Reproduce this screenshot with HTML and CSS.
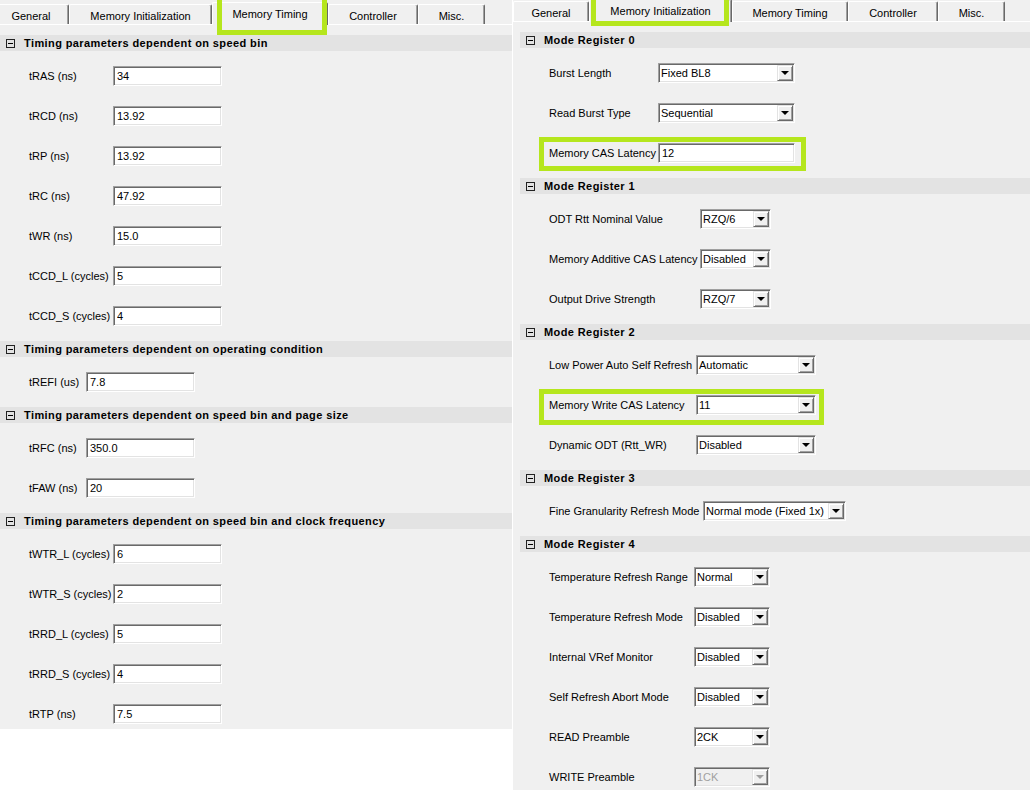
FILE: index.html
```html
<!DOCTYPE html>
<html lang="en">
<head>
    <meta charset="UTF-8">
    <title>Memory Interface Settings</title>
    <link rel="stylesheet" href="styles.css">
</head>
<body>
    <div class="screen">
        <!-- Memory Timing tab -->
        <section class="dialog dialog-timing">
            <div class="tabs">
                <span class="tab tab-general">General</span>
                <span class="tab tab-init">Memory Initialization</span>
                <span class="tab tab-timing is-active">Memory Timing</span>
                <span class="tab tab-controller">Controller</span>
                <span class="tab tab-misc">Misc.</span>
            </div>
            <div class="pane">
                <div class="group speed-bin">
                    <div class="group-head"><span class="toggle"></span>Timing parameters dependent on speed bin</div>
                    <div class="group-body">
                        <div class="field"><span class="label">tRAS (ns)</span><input class="textbox" value="34"></div>
                        <div class="field"><span class="label">tRCD (ns)</span><input class="textbox" value="13.92"></div>
                        <div class="field"><span class="label">tRP (ns)</span><input class="textbox" value="13.92"></div>
                        <div class="field"><span class="label">tRC (ns)</span><input class="textbox" value="47.92"></div>
                        <div class="field"><span class="label">tWR (ns)</span><input class="textbox" value="15.0"></div>
                        <div class="field"><span class="label">tCCD_L (cycles)</span><input class="textbox" value="5"></div>
                        <div class="field"><span class="label">tCCD_S (cycles)</span><input class="textbox" value="4"></div>
                    </div>
                </div>
                <div class="group op-cond">
                    <div class="group-head"><span class="toggle"></span>Timing parameters dependent on operating condition</div>
                    <div class="group-body">
                        <div class="field"><span class="label">tREFI (us)</span><input class="textbox" value="7.8"></div>
                    </div>
                </div>
                <div class="group page-size">
                    <div class="group-head"><span class="toggle"></span>Timing parameters dependent on speed bin and page size</div>
                    <div class="group-body">
                        <div class="field"><span class="label">tRFC (ns)</span><input class="textbox" value="350.0"></div>
                        <div class="field"><span class="label">tFAW (ns)</span><input class="textbox" value="20"></div>
                    </div>
                </div>
                <div class="group clock-freq">
                    <div class="group-head"><span class="toggle"></span>Timing parameters dependent on speed bin and clock frequency</div>
                    <div class="group-body">
                        <div class="field"><span class="label">tWTR_L (cycles)</span><input class="textbox" value="6"></div>
                        <div class="field"><span class="label">tWTR_S (cycles)</span><input class="textbox" value="2"></div>
                        <div class="field"><span class="label">tRRD_L (cycles)</span><input class="textbox" value="5"></div>
                        <div class="field"><span class="label">tRRD_S (cycles)</span><input class="textbox" value="4"></div>
                        <div class="field"><span class="label">tRTP (ns)</span><input class="textbox" value="7.5"></div>
                    </div>
                </div>
            </div>
        </section>

        <!-- Memory Initialization tab -->
        <section class="dialog dialog-init">
            <div class="tabs">
                <span class="tab tab-general">General</span>
                <span class="tab tab-init is-active">Memory Initialization</span>
                <span class="tab tab-timing">Memory Timing</span>
                <span class="tab tab-controller">Controller</span>
                <span class="tab tab-misc">Misc.</span>
            </div>
            <div class="pane">
                <div class="group mr0">
                    <div class="group-head"><span class="toggle"></span>Mode Register 0</div>
                    <div class="group-body">
                        <div class="field"><span class="label">Burst Length</span><div class="combo"><span class="combo-value">Fixed BL8</span><span class="combo-btn"></span></div></div>
                        <div class="field"><span class="label">Read Burst Type</span><div class="combo"><span class="combo-value">Sequential</span><span class="combo-btn"></span></div></div>
                        <div class="field marked mark-wide"><span class="label">Memory CAS Latency</span><input class="textbox" value="12"></div>
                    </div>
                </div>
                <div class="group mr1">
                    <div class="group-head"><span class="toggle"></span>Mode Register 1</div>
                    <div class="group-body">
                        <div class="field"><span class="label">ODT Rtt Nominal Value</span><div class="combo"><span class="combo-value">RZQ/6</span><span class="combo-btn"></span></div></div>
                        <div class="field"><span class="label">Memory Additive CAS Latency</span><div class="combo"><span class="combo-value">Disabled</span><span class="combo-btn"></span></div></div>
                        <div class="field"><span class="label">Output Drive Strength</span><div class="combo"><span class="combo-value">RZQ/7</span><span class="combo-btn"></span></div></div>
                    </div>
                </div>
                <div class="group mr2">
                    <div class="group-head"><span class="toggle"></span>Mode Register 2</div>
                    <div class="group-body">
                        <div class="field"><span class="label">Low Power Auto Self Refresh</span><div class="combo"><span class="combo-value">Automatic</span><span class="combo-btn"></span></div></div>
                        <div class="field marked"><span class="label">Memory Write CAS Latency</span><div class="combo"><span class="combo-value">11</span><span class="combo-btn"></span></div></div>
                        <div class="field"><span class="label">Dynamic ODT (Rtt_WR)</span><div class="combo"><span class="combo-value">Disabled</span><span class="combo-btn"></span></div></div>
                    </div>
                </div>
                <div class="group mr3">
                    <div class="group-head"><span class="toggle"></span>Mode Register 3</div>
                    <div class="group-body">
                        <div class="field"><span class="label">Fine Granularity Refresh Mode</span><div class="combo"><span class="combo-value">Normal mode (Fixed 1x)</span><span class="combo-btn"></span></div></div>
                    </div>
                </div>
                <div class="group mr4">
                    <div class="group-head"><span class="toggle"></span>Mode Register 4</div>
                    <div class="group-body">
                        <div class="field"><span class="label">Temperature Refresh Range</span><div class="combo"><span class="combo-value">Normal</span><span class="combo-btn"></span></div></div>
                        <div class="field"><span class="label">Temperature Refresh Mode</span><div class="combo"><span class="combo-value">Disabled</span><span class="combo-btn"></span></div></div>
                        <div class="field"><span class="label">Internal VRef Monitor</span><div class="combo"><span class="combo-value">Disabled</span><span class="combo-btn"></span></div></div>
                        <div class="field"><span class="label">Self Refresh Abort Mode</span><div class="combo"><span class="combo-value">Disabled</span><span class="combo-btn"></span></div></div>
                        <div class="field"><span class="label">READ Preamble</span><div class="combo"><span class="combo-value">2CK</span><span class="combo-btn"></span></div></div>
                        <div class="field"><span class="label">WRITE Preamble</span><div class="combo is-disabled"><span class="combo-value">1CK</span><span class="combo-btn"></span></div></div>
                    </div>
                </div>
            </div>
        </section>
    </div>
</body>
</html>
```

FILE: styles.css
```css
/* Reset */
*,
*::before,
*::after {
    margin: 0;
    padding: 0;
    box-sizing: border-box;
}

:root {
    --face: #f0f0f0;
    --band: #e3e3e3;
    --shadow: #a0a0a0;
    --dark-shadow: #696969;
    --light: #e3e3e3;
    --highlight: #b5e61d;
}

body {
    font-family: "Liberation Sans", Arial, sans-serif;
    font-size: 11px;
    color: #000;
    background: #fff;
    width: 1030px;
    height: 790px;
    overflow: hidden;
}

.screen {
    display: flex;
    gap: 1px;
    align-items: flex-start;
}

.dialog {
    background: var(--face);
    overflow: hidden;
    flex: none;
}

.dialog-timing {
    width: 519px;
    height: 729px;
    margin-left: -7px;
}

.dialog-init {
    width: 517px;
    height: 790px;
}

/* Tabs */
.tabs {
    display: flex;
    align-items: flex-end;
    border-bottom: 1px solid #fff;
    padding-top: 1px;
}

.dialog-timing .tabs {
    padding-top: 4px;
}

.tab {
    position: relative;
    height: 20px;
    padding-top: 4px;
    line-height: 15px;
    text-align: center;
    white-space: nowrap;
    background: var(--face);
    border-top: 1px solid #fff;
    border-left: 1px solid #fff;
    border-right: 1px solid var(--dark-shadow);
    box-shadow: inset -1px 0 0 var(--shadow);
    border-radius: 2px 2px 0 0;
}

.tab-general { width: 76px; }
.tab-init { width: 143px; }
.tab-timing { width: 116px; }
.tab-controller { width: 90px; }
.tab-misc { width: 67px; }

.tab.is-active {
    height: 23px;
    margin-top: -2px;
    margin-bottom: -1px;
    z-index: 1;
}

.tab.is-active::after {
    content: "";
    position: absolute;
    top: -8px;
    border: 5px solid var(--highlight);
}

.dialog-timing .tab.is-active::after {
    left: 4px;
    right: 0;
    bottom: -10px;
}

.dialog-init .tab.is-active::after {
    left: 1px;
    right: 2px;
    bottom: -4px;
}

/* Property groups */
.pane {
    padding: 10px 0 0 7px;
}

.group-head {
    display: flex;
    align-items: center;
    height: 16px;
    padding-left: 6px;
    background: var(--band);
    font-weight: bold;
    letter-spacing: 0.4px;
    white-space: nowrap;
}

.toggle {
    position: relative;
    width: 9px;
    height: 9px;
    margin-right: 9px;
    border: 1px solid #222;
    flex: none;
}

.toggle::after {
    content: "";
    position: absolute;
    left: 1px;
    top: 3px;
    width: 5px;
    height: 1px;
    background: #000;
}

.group-body {
    padding: 5px 0 5px 29px;
}

.speed-bin,
.clock-freq { --label: 84px; --ctrl: 109px; }
.op-cond,
.page-size { --label: 57px; --ctrl: 109px; }
.mr0 { --label: 109px; --ctrl: 137px; }
.mr1 { --label: 151px; --ctrl: 71px; }
.mr2 { --label: 147px; --ctrl: 120px; }
.mr3 { --label: 154px; --ctrl: 143px; }
.mr4 { --label: 145px; --ctrl: 76px; }

.field {
    position: relative;
    display: flex;
    align-items: center;
    width: fit-content;
    height: 40px;
}

.field.marked::before {
    content: "";
    position: absolute;
    left: -10px;
    right: -8px;
    top: 4px;
    height: 36px;
    border: 5px solid var(--highlight);
}

.field.mark-wide::before {
    right: -11px;
    height: 34px;
}

.label {
    width: var(--label);
    white-space: nowrap;
    flex: none;
}

/* Sunken controls */
.textbox,
.combo {
    width: var(--ctrl);
    height: 20px;
    background: #fff;
    border: 1px solid;
    border-color: var(--shadow) #fff #fff var(--shadow);
    box-shadow: inset 1px 1px 0 var(--dark-shadow), inset -1px -1px 0 var(--light);
    font: inherit;
    color: #000;
}

.textbox {
    padding: 0 2px 0 3px;
    outline: none;
}

.combo {
    position: relative;
    display: flex;
    align-items: center;
    padding-left: 2px;
    white-space: nowrap;
}

.combo-btn {
    position: absolute;
    right: 1px;
    top: 1px;
    width: 16px;
    height: 16px;
    background: var(--face);
    border-top: 1px solid var(--light);
    border-left: 1px solid var(--light);
    border-right: 1px solid var(--dark-shadow);
    border-bottom: 1px solid var(--dark-shadow);
    box-shadow: inset 1px 1px 0 #fff, inset -1px -1px 0 var(--shadow);
}

.combo-btn::after {
    content: "";
    position: absolute;
    left: 3px;
    top: 5px;
    border-left: 4px solid transparent;
    border-right: 4px solid transparent;
    border-top: 4px solid #000;
}

.combo.is-disabled {
    background: var(--face);
    color: var(--shadow);
}

.combo.is-disabled .combo-btn::after {
    border-top-color: var(--shadow);
}
```
